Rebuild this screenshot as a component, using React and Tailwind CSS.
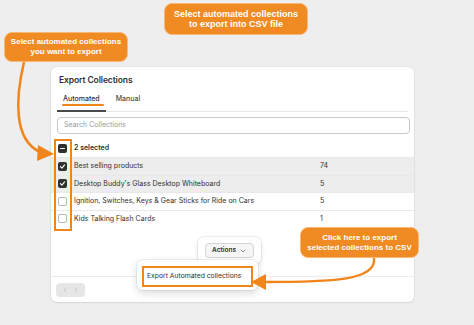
import { ChevronDown, ChevronLeft, ChevronRight } from 'lucide-react';

const ORANGE = '#f0851c';

const rows = [
  { name: 'Best selling products', count: 74, checked: true },
  { name: "Desktop Buddy's Glass Desktop Whiteboard", count: 5, checked: true },
  { name: 'Ignition, Switches, Keys & Gear Sticks for Ride on Cars', count: 5, checked: false },
  { name: 'Kids Talking Flash Cards', count: 1, checked: false },
];

// Polaris-ish checkbox
function Checkbox({ state }) {
  if (state === 'checked') {
    return (
      <span className="w-[9px] h-[9px] rounded-[2px] bg-[#303030] flex items-center justify-center">
        <svg width="7" height="7" viewBox="0 0 10 10">
          <path d="M2 5.2 L4.2 7.3 L8 2.8" fill="none" stroke="white" strokeWidth="1.6" strokeLinecap="round" strokeLinejoin="round" />
        </svg>
      </span>
    );
  }
  if (state === 'mixed') {
    return (
      <span className="w-[9px] h-[9px] rounded-[2px] bg-[#303030] flex items-center justify-center">
        <span className="w-[5px] h-[1.5px] bg-white rounded-full"></span>
      </span>
    );
  }
  return <span className="w-[9px] h-[9px] rounded-[2px] border border-[#b8b8b8] bg-white"></span>;
}

function Callout({ className, size, children }) {
  return (
    <div
      className={`absolute rounded-[8px] bg-[#f08a22] border border-[#f8b877] flex flex-col items-center justify-center text-white font-bold font-['Liberation_Sans',Arial,sans-serif] ${size} ${className}`}
    >
      {children}
    </div>
  );
}

export default function App() {
  return (
    <div className="relative w-[474px] h-[325px] overflow-hidden bg-[#eeeeee] pt-[67px] pl-[51px] font-['Inter',sans-serif] text-[#303030]">
      {/* Card */}
      <div className="relative w-[363px] h-[235px] bg-white rounded-[6px] shadow-[0_0_0_1px_rgba(0,0,0,0.04),0_1px_2px_rgba(0,0,0,0.06)] flex flex-col">
        <h2 className="pt-[7px] pl-[8px] text-[8.5px] leading-[12px] font-semibold tracking-[-0.1px]">Export Collections</h2>

        {/* Tabs */}
        <div className="mt-[5px] mx-[6px] flex border-b border-[#e6e6e6]">
          <div className="relative px-[6px] pt-[2px] pb-[5px] border-b-2 border-[#4a4a4a] -mb-px text-[7px] leading-[12px] font-medium">
            Automated
            <span className="absolute left-[5px] right-[2px] top-[13px] h-[2px] rounded-full bg-[#f0851c]"></span>
          </div>
          <div className="px-[10px] pt-[2px] text-[7px] leading-[12px] font-medium text-[#4a4a4a]">Manual</div>
        </div>

        {/* Search */}
        <div className="mt-[5px] ml-[6px] mr-[4px] h-[17px] rounded-[4px] border border-[#c9c9c9] flex items-center px-[6px] text-[7px] text-[#9a9a9a]">
          Search Collections
        </div>

        {/* List */}
        <div className="mt-[6px] flex flex-col text-[7px]">
          <div className="h-[17px] flex items-center pl-[7px]">
            <Checkbox state="mixed" />
            <span className="ml-[7px] font-semibold">2 selected</span>
          </div>
          {rows.map((r) => (
            <div
              key={r.name}
              className={`h-[17.5px] flex items-center pl-[7px] border-t border-[#e9e9e9] ${r.checked ? 'bg-[#ededed]' : 'bg-white'}`}
            >
              <Checkbox state={r.checked ? 'checked' : 'empty'} />
              <span className="ml-[7px] w-[240px] truncate">{r.name}</span>
              <span className="ml-[6px]">{r.count}</span>
            </div>
          ))}
        </div>

        {/* Bulk actions */}
        <div className="mt-[10px] flex justify-center pr-[6px]">
          <div className="rounded-[6px] bg-white shadow-[0_0_0_1px_rgba(0,0,0,0.05),0_2px_5px_rgba(0,0,0,0.12)] px-[7px] pt-[6px] pb-[6px]">
            <div className="h-[15px] px-[6px] rounded-[4px] border border-[#d4d4d4] bg-[#f6f6f6] flex items-center gap-[3px] text-[6.5px] font-semibold">
              Actions
              <ChevronDown size={8} strokeWidth={2} className="text-[#555]" />
            </div>
          </div>
        </div>

        {/* Footer */}
        <div className="mt-auto border-t border-[#ececec] pt-[6px] pb-[5px] pl-[5px]">
          <div className="w-[29px] h-[14px] rounded-[4px] bg-[#e6e6e6] flex items-center justify-center gap-[3px] text-[#b9b9b9]">
            <ChevronLeft size={8} strokeWidth={2} />
            <ChevronRight size={8} strokeWidth={2} />
          </div>
        </div>

        {/* Popover menu */}
        <div className="absolute left-[86px] top-[193px] w-[121px] rounded-[6px] bg-white shadow-[0_0_0_1px_rgba(0,0,0,0.05),0_3px_8px_rgba(0,0,0,0.15)] pt-[6px] px-[5px] pb-[3px]">
          <div className="h-[21px] border-2 border-[#f0851c] flex items-center pl-[3px] text-[6.8px] text-[#303030]">
            Export Automated collections
          </div>
        </div>
      </div>

      {/* Annotation: box around the checkboxes */}
      <div className="absolute left-[54px] top-[139px] w-[18px] h-[92px] border-2 border-[#f0851c]"></div>

      {/* Arrows */}
      <svg className="absolute inset-0 pointer-events-none" width="474" height="325">
        <path d="M24 62 C 15 100, 14 140, 40 152" fill="none" stroke={ORANGE} strokeWidth="2.5" />
        <polygon points="54,154 38,145 37,161" fill={ORANGE} />
        <path d="M374 258 C 377 281, 330 282, 264 282" fill="none" stroke={ORANGE} strokeWidth="2.5" />
        <polygon points="251,282 266,274 266,290" fill={ORANGE} />
      </svg>

      <Callout className="left-[164px] top-[3px] w-[144px] h-[32px]" size="text-[9px] leading-[10.5px]">
        <span>Select automated collections</span>
        <span>to export into CSV file</span>
      </Callout>
      <Callout className="left-[4px] top-[32px] w-[124px] h-[30px]" size="text-[8px] leading-[10px]">
        <span>Select automated collections</span>
        <span>you want to export</span>
      </Callout>
      <Callout className="left-[300px] top-[227px] w-[119px] h-[31px]" size="text-[8px] leading-[10px]">
        <span>Click here to export</span>
        <span>selected collections to CSV</span>
      </Callout>
    </div>
  );
}
